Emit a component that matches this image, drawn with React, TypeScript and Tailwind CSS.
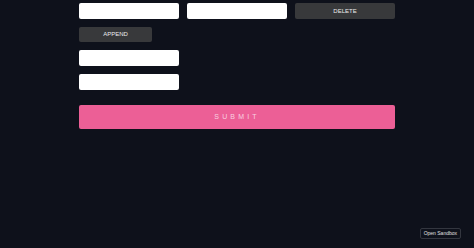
import { useState } from 'react';

type Row = { id: number; first: string; last: string };

function App() {
  const [rows, setRows] = useState<Row[]>([{ id: 1, first: '', last: '' }]);

  return (
    <div className="relative min-h-[248px] w-full bg-[#0e111b] font-['Liberation_Sans',Arial,sans-serif]">
      <form className="flex w-[316px] flex-col pl-0 pt-[3px] ml-[79px]" onSubmit={(e) => e.preventDefault()}>
        {/* Field array */}
        {rows.map((r) => (
          <div key={r.id} className="flex gap-2">
            <input className="h-4 w-[100px] rounded-[2px] bg-white text-[8px] outline-none" />
            <input className="h-4 w-[100px] rounded-[2px] bg-white text-[8px] outline-none" />
            <button
              type="button"
              onClick={() => setRows(rows.filter((x) => x.id !== r.id))}
              className="h-4 w-[100px] rounded-[2px] bg-[#38393b] text-[6px] uppercase text-[#ececec]"
            >
              Delete
            </button>
          </div>
        ))}

        <button
          type="button"
          onClick={() => setRows([...rows, { id: Date.now(), first: '', last: '' }])}
          className="mt-2 h-[15px] w-[73px] rounded-[2px] bg-[#38393b] text-[6px] uppercase text-[#ececec]"
        >
          Append
        </button>

        <input className="mt-2 h-4 w-[100px] rounded-[2px] bg-white text-[8px] outline-none" />
        <input className="mt-2 h-4 w-[100px] rounded-[2px] bg-white text-[8px] outline-none" />

        <button
          type="submit"
          className="mt-[15px] h-6 w-full rounded-[2px] bg-[#ec5f96] text-[7px] uppercase tracking-[0.45em] text-[#f8d0e0]"
        >
          Submit
        </button>
      </form>

      <button className="absolute right-[13px] top-[228px] h-[11px] rounded-[2px] border border-[#33363f] bg-[#0e111b] px-[3px] text-[5px] leading-none text-[#e0e0e0]">
        Open Sandbox
      </button>
    </div>
  );
}

export default App;
